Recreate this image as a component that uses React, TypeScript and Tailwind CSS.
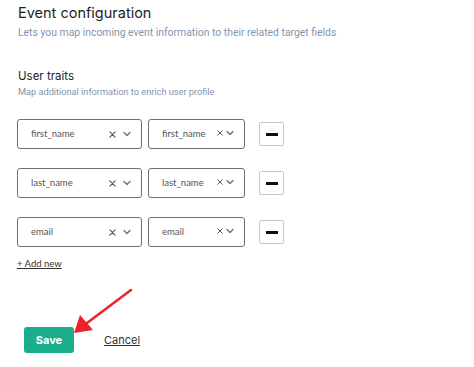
import React from "react";

const rows = [
  { source: "first_name", target: "first_name" },
  { source: "last_name", target: "last_name" },
  { source: "email", target: "email" },
];

function Chevron() {
  return (
    <svg width="10" height="10" viewBox="0 0 10 10" fill="none" stroke="#6b7a90" strokeWidth="1.5" strokeLinecap="round" strokeLinejoin="round">
      <path d="M2 3.5 L5 6.5 L8 3.5" />
    </svg>
  );
}

function Cross({ size = 7 }: { size?: number }) {
  return (
    <svg width={size} height={size} viewBox="0 0 8 8" fill="none" stroke="#555" strokeWidth="1.3" strokeLinecap="round">
      <path d="M1 1 L7 7 M7 1 L1 7" />
    </svg>
  );
}

function SelectBox({ value, width, small }: { value: string; width: string; small?: boolean }) {
  return (
    <div className={`${width} h-[30px] border border-[#6f6f6f] rounded-[3px] flex items-center pl-[13px] pr-[9px] bg-white`}>
      <span className="flex-1 text-[9.5px] text-[#555] font-['Lato',sans-serif]">{value}</span>
      <div className={`flex items-center ${small ? "gap-[2px] -mt-[3px]" : "gap-[6px]"}`}>
        <Cross size={small ? 6 : 7} />
        <Chevron />
      </div>
    </div>
  );
}

export default function App() {
  return (
    <div className="relative w-[474px] h-[367px] bg-white overflow-hidden font-['Inter',sans-serif]">
      <div className="pl-[18px] pt-[3px] flex flex-col">
        <h1 className="text-[14.5px] leading-[20px] text-[#1e1e1e]">Event configuration</h1>
        <p className="text-[10.4px] leading-[16px] mt-[2px] text-[#8594ad] font-['Roboto',sans-serif]">
          Lets you map incoming event information to their related target fields
        </p>

        <h2 className="text-[11.5px] leading-[16px] text-[#222] mt-[27px]">User traits</h2>
        <p className="text-[9.2px] leading-[14px] mt-[1px] text-[#8594ad] font-['Roboto',sans-serif]">
          Map additional information to enrich user profile
        </p>

        <div className="flex flex-col gap-[19px] mt-[20px] -ml-[1px]">
          {rows.map((r) => (
            <div key={r.source} className="flex items-center">
              <SelectBox value={r.source} width="w-[125px]" />
              <div className="ml-[6px]">
                <SelectBox value={r.target} width="w-[97px]" small />
              </div>
              <button className="ml-[14px] w-[25px] h-[24px] border border-[#c4c8cd] rounded-[2px] flex items-center justify-center bg-white">
                <span className="block w-[12px] h-[3px] bg-[#111]" />
              </button>
            </div>
          ))}
        </div>

        <a className="mt-[10px] -ml-[1px] text-[9.5px] leading-[14px] text-[#333] underline font-['Lato',sans-serif]">+ Add new</a>

        <div className="flex items-center mt-[56px] ml-[6px]">
          <button className="w-[50px] h-[26px] rounded-[3px] bg-[#1aae8c] text-white text-[11px] font-bold font-['Inter',sans-serif]">
            Save
          </button>
          <a className="ml-[30px] text-[11px] text-[#333] underline font-['Inter',sans-serif]">Cancel</a>
        </div>
      </div>

      <svg className="absolute left-0 top-0" width="474" height="367" viewBox="0 0 474 367">
        <path d="M131 290 L87 323" stroke="#e8232a" strokeWidth="2.5" strokeLinecap="round" />
        <path d="M74 333 L80 315 L93 330 Z" fill="#e8232a" />
      </svg>
    </div>
  );
}
